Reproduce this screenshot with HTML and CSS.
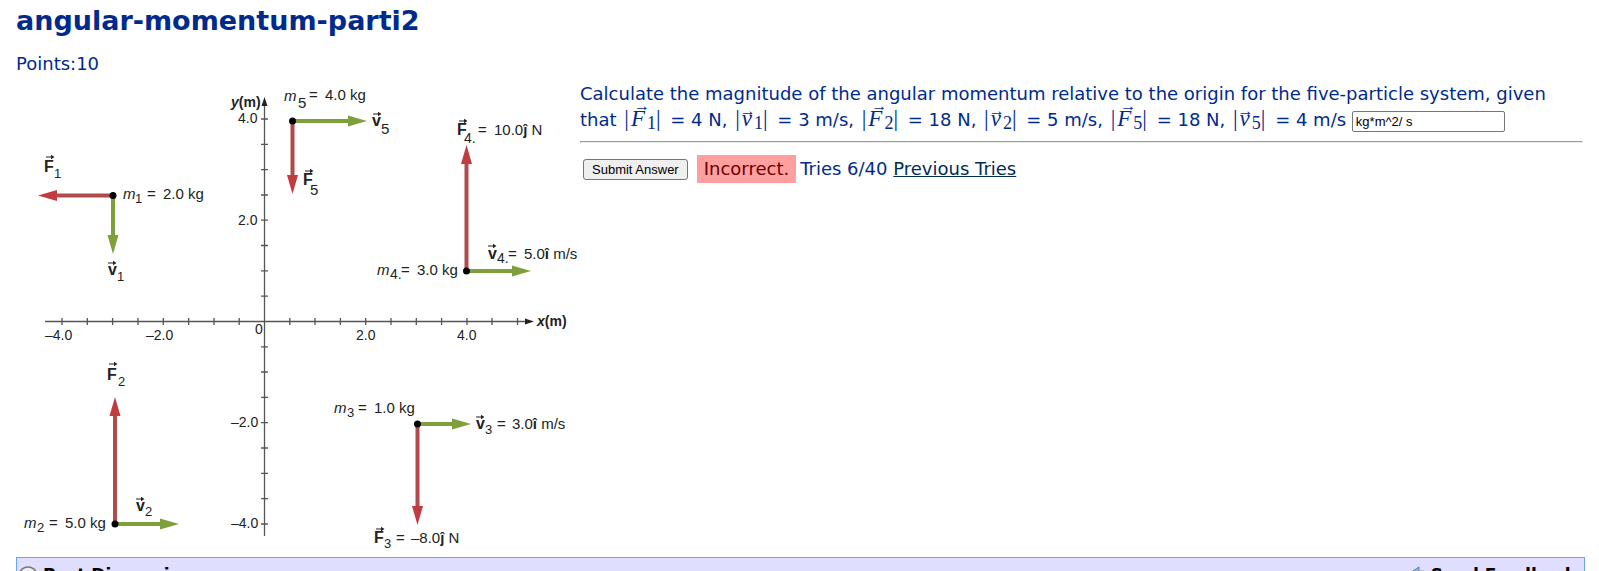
FILE: index.html
```
<!DOCTYPE html>
<html lang="en">
<head>
  <meta charset="UTF-8">
  <meta name="viewport" content="width=device-width, initial-scale=1">
  <title>angular-momentum-parti2</title>
  <link rel="stylesheet" href="styles.css">
</head>
<body>

<h1>angular-momentum-parti2</h1>
<p class="points">Points:10</p>

<main class="problem">
  <svg class="figure" width="564" height="466" viewBox="16 86 564 466" role="img" aria-label="Five particles in the x-y plane with forces and velocities">
    <defs>
      <path id="hat" d="M0 -.6h5v-1.6l3.5 2.2l-3.5 2.2v-1.6h-5z"/>
      <path id="head" d="M0 0l-19 -5.5v11z"/>
    </defs>

    <!-- axes -->
    <path class="axis" d="M45 321.5H528M264.5 102V536"/>
    <path class="axis" d="M62 318v7M87.300 318v7M112.600 318v7M138 318v7M163.300 318v7M188.600 318v7M214 318v7M239.200 318v7M289.800 318v7M315 318v7M340.400 318v7M365.700 318v7M391 318v7M416.300 318v7M441.600 318v7M467 318v7M492 318v7M517.500 318v7"/>
    <path class="axis" d="M261 119h7M261 144.300h7M261 169.600h7M261 195h7M261 220.200h7M261 245.500h7M261 270.800h7M261 296.200h7M261 346.800h7M261 372h7M261 397.400h7M261 422.700h7M261 448h7M261 473.300h7M261 498.600h7M261 524h7"/>
    <path d="M534 321.500l-9 -3v6zM264.500 97l-3 9h6z"/>
    <g class="tick">
      <text x="45" y="340">–4.0</text>
      <text x="146" y="340">–2.0</text>
      <text x="255" y="334">0</text>
      <text x="356" y="340">2.0</text>
      <text x="457" y="340">4.0</text>
      <text x="238" y="123">4.0</text>
      <text x="238" y="225">2.0</text>
      <text x="231" y="427">–2.0</text>
      <text x="231" y="528">–4.0</text>
      <text class="b" x="231" y="107"><tspan class="i">y</tspan>(m)</text>
      <text class="b" x="537" y="326"><tspan class="i">x</tspan>(m)</text>
    </g>

    <!-- forces -->
    <g class="force">
      <path d="M113 195.500H55M115 524V415M417.500 424V507M466.500 271V162M292.500 121V176"/>
      <use href="#head" transform="translate(38 195.500) rotate(180)"/>
      <use href="#head" transform="translate(115 397) rotate(-90)"/>
      <use href="#head" transform="translate(417.500 525) rotate(90)"/>
      <use href="#head" transform="translate(466.500 145) rotate(-90)"/>
      <use href="#head" transform="translate(292.500 194) rotate(90)"/>
    </g>

    <!-- velocities -->
    <g class="velocity">
      <path d="M113 195.500V236M115 524H161M417.500 424H453M466.500 271H513M292.500 121H349"/>
      <use href="#head" transform="translate(113 254) rotate(90)"/>
      <use href="#head" transform="translate(179 524)"/>
      <use href="#head" transform="translate(471 424)"/>
      <use href="#head" transform="translate(531 271)"/>
      <use href="#head" transform="translate(367 121)"/>
    </g>

    <g class="dot">
      <circle cx="113" cy="195.500" r="3.500"/>
      <circle cx="115" cy="524" r="3.500"/>
      <circle cx="417.500" cy="424" r="3.500"/>
      <circle cx="466.500" cy="271" r="3.500"/>
      <circle cx="292.500" cy="121" r="3.500"/>
    </g>

    <!-- particle 1 -->
    <text class="i" x="123" y="199">m</text><text class="sub" x="135" y="203">1</text>
    <text x="147" y="199">=</text><text x="163" y="199">2.0 kg</text>
    <use href="#hat" x="46" y="157"/><text class="vector" x="44" y="172">F</text><text class="sub" x="54" y="178">1</text>
    <use href="#hat" x="108" y="263"/><text class="vector" x="108" y="275">v</text><text class="sub" x="117" y="281">1</text>

    <!-- particle 2 -->
    <text class="i" x="24" y="528">m</text><text class="sub" x="37" y="532">2</text>
    <text x="49" y="528">=</text><text x="65" y="528">5.0 kg</text>
    <use href="#hat" x="109" y="364"/><text class="vector" x="107" y="380">F</text><text class="sub" x="118" y="386">2</text>
    <use href="#hat" x="136" y="499"/><text class="vector" x="136" y="511">v</text><text class="sub" x="145" y="516">2</text>

    <!-- particle 3 -->
    <text class="i" x="334" y="413">m</text><text class="sub" x="347" y="417">3</text>
    <text x="358" y="413">=</text><text x="374" y="413">1.0 kg</text>
    <use href="#hat" x="376" y="529"/><text class="vector" x="374" y="543">F</text><text class="sub" x="384" y="548">3</text>
    <text x="396" y="543">=</text><text x="411" y="543">–8.0<tspan class="b">ĵ</tspan> N</text>
    <use href="#hat" x="476" y="417"/><text class="vector" x="476" y="429">v</text><text class="sub" x="485" y="434">3</text>
    <text x="497" y="429">=</text><text x="512" y="429">3.0<tspan class="b">î</tspan> m/s</text>

    <!-- particle 4 -->
    <text class="i" x="377" y="275">m</text><text class="big" x="390" y="279">4.</text>
    <text x="401" y="275">=</text><text x="417" y="275">3.0 kg</text>
    <use href="#hat" x="459" y="121"/><text class="vector" x="457" y="135">F</text><text class="big" x="464" y="143">4.</text>
    <text x="478" y="135">=</text><text x="494" y="135">10.0<tspan class="b">ĵ</tspan> N</text>
    <use href="#hat" x="488" y="246"/><text class="vector" x="488" y="259">v</text><text class="big" x="497" y="263">4.</text>
    <text x="508" y="259">=</text><text x="524" y="259">5.0<tspan class="b">î</tspan> m/s</text>

    <!-- particle 5 -->
    <text class="i" x="284" y="101">m</text><text class="five" x="298" y="108">5</text>
    <text x="309" y="100">=</text><text x="325" y="100">4.0 kg</text>
    <use href="#hat" x="373" y="114"/><text class="vector" x="372" y="126">v</text><text class="five" x="381" y="134">5</text>
    <use href="#hat" x="305" y="171"/><text class="vector" x="303" y="185">F</text><text class="five" x="310" y="195">5</text>
  </svg>

  <form class="question">
    <label for="answer">Calculate the magnitude of the angular momentum relative to the origin for the five-particle system, given that
      <span class="math">|<i class="vec">F</i><sub>1</sub>|</span> = 4 N,
      <span class="math">|<i class="vec v">v</i><sub>1</sub>|</span> = 3 m/s,
      <span class="math">|<i class="vec">F</i><sub>2</sub>|</span> = 18 N,
      <span class="math">|<i class="vec v">v</i><sub>2</sub>|</span> = 5 m/s,
      <span class="math">|<i class="vec">F</i><sub>5</sub>|</span> = 18 N,
      <span class="math">|<i class="vec v">v</i><sub>5</sub>|</span> = 4 m/s</label>
    <input class="answer" id="answer" type="text" value="kg*m^2/ s">
    <hr>
    <div class="result">
      <button class="submit" type="button">Submit Answer</button>
      <span class="incorrect">Incorrect.</span>
      <span>Tries 6/40 <a href="#">Previous Tries</a></span>
    </div>
  </form>
</main>

<footer class="bar">
  <a href="#">
    <svg width="18" height="18" viewBox="0 0 18 18"><ellipse cx="9" cy="7.500" rx="8" ry="6.500" fill="#eee" stroke="#777" stroke-width="1.500"/><path d="M5 13l-1 4l5 -3z" fill="#777"/></svg>
    Post Discussion
  </a>
  <a href="#">
    <svg width="18" height="18" viewBox="0 0 18 18"><path d="M3 7l9 -6v11l-9 3z" fill="#8fb8e0" stroke="#4a7fb5"/><path d="M10 5h7v9h-7z" fill="#f4f4ea" stroke="#999"/></svg>
    Send Feedback
  </a>
</footer>

</body>
</html>
```
FILE: styles.css
```
body {
  box-sizing: border-box;
  height: 100vh;
  margin: 0;
  padding: 0 14px 0 16px;
  overflow: hidden;
  background-color: #fff;
  color: #002b8c;
  font-family: Verdana, "DejaVu Sans", sans-serif;
  font-size: 18px;
  line-height: 26px;
}
h1 {
  margin: 0;
  padding-top: 5px;
  font-size: 27px;
  line-height: 32px;
}
.points {
  margin: 14px 0 4px;
}
.problem {
  display: flex;
  align-items: flex-start;
}
/* figure */
.figure {
  flex: none;
  display: block;
  margin-top: 5px;
  font-family: "Liberation Sans", Arial, sans-serif;
  font-size: 15px;
  fill: #222;
}
.figure .tick {
  font-size: 14px;
}
.figure .axis {
  stroke: #555;
  stroke-width: 1.3;
}
.figure .i {
  font-style: italic;
}
.figure .b {
  font-weight: bold;
}
.figure .vector {
  font-size: 16px;
  font-weight: bold;
}
.figure .sub {
  font-size: 13px;
}
.figure .big {
  font-size: 14px;
}
.figure .five {
  font-size: 15px;
}
.figure .dot {
  fill: #000;
}
.force, .velocity {
  stroke-width: 4;
}
.force {
  fill: #c23b3f;
}
.force path {
  stroke: #b04a4c;
}
.velocity {
  fill: #7d9f3c;
}
.velocity path {
  stroke: #7d9f3c;
}
#head, #hat {
  stroke: none;
}
/* question */
.question {
  flex: 1;
  padding-right: 2px;
}
.math {
  margin: 0 4px 0 2px;
  font-family: "Liberation Serif", "Times New Roman", serif;
  font-size: 23px;
  line-height: 20px;
  white-space: nowrap;
}
.math sub {
  font-size: 18px;
  line-height: 0;
  vertical-align: -3px;
}
.vec {
  position: relative;
  padding: 0 2px;
}
.vec::before {
  content: "→";
  position: absolute;
  top: -10px;
  left: 5px;
  font-size: 16px;
  font-style: normal;
}
.vec.v::before {
  top: -5px;
  left: 0;
}
.answer {
  box-sizing: border-box;
  width: 153px;
  height: 21px;
  padding: 1px 3px;
  border: 1px solid #767676;
  border-radius: 2px;
  background-color: #fff;
  color: #000;
  font: 13px "Liberation Sans", Arial, sans-serif;
}
hr {
  margin: 8px 0 12px;
}
.result {
  display: flex;
  align-items: center;
  padding-left: 3px;
}
.submit {
  height: 21px;
  padding: 0 8px;
  border: 1px solid #767676;
  border-radius: 3px;
  background-color: #efefef;
  color: #000;
  font: 13px "Liberation Sans", Arial, sans-serif;
}
.incorrect {
  margin: 0 4px 0 9px;
  padding: 1px 7px;
  background-color: #ff9f9f;
  color: #6b0000;
}
.result a {
  color: #002b55;
}
/* bottom bar */
.bar {
  display: flex;
  justify-content: space-between;
  margin-top: 5px;
  padding: 4px 8px 4px 2px;
  border: 1px solid #6ca6f0;
  background-color: #e0deff;
}
.bar a {
  display: flex;
  align-items: center;
  gap: 6px;
  color: #000;
  font-size: 17px;
  font-weight: bold;
  text-decoration: none;
}
```
